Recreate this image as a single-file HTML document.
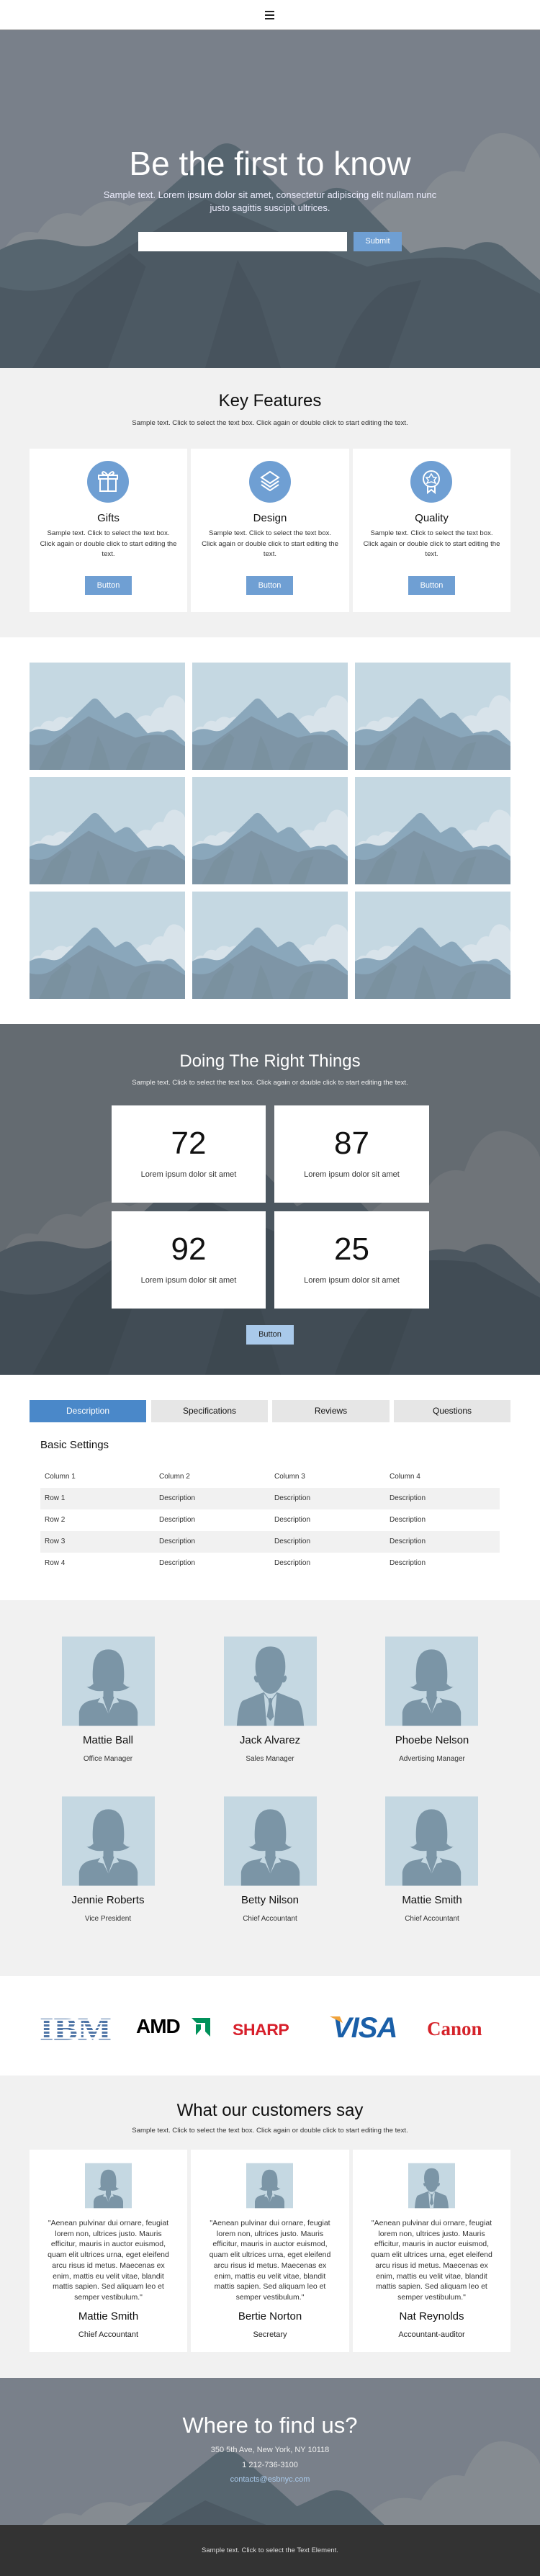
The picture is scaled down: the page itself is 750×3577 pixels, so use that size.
<!DOCTYPE html>
<html><head><meta charset="utf-8"><style>
*{margin:0;padding:0;box-sizing:border-box}
body{width:750px;height:3577px;position:relative;font-family:"Liberation Sans",sans-serif;color:#111;background:#fff;overflow:hidden}
.abs{position:absolute}
.c{text-align:center}
.sec{position:absolute;left:0;width:750px}
.scene{position:absolute;left:0;top:0;width:100%;height:100%}
.btn{position:absolute;background:#6f9fd3;color:#fff;font-size:11px;text-align:center}
.card{position:absolute;background:#fff}
.t{position:absolute;left:0;width:100%;text-align:center}
.p{font-size:9.6px;line-height:14.7px;color:#333}
.q{font-size:10.5px;line-height:14.7px;color:#333;padding:0 22px}
</style></head><body>
<svg width="0" height="0" style="position:absolute">
<defs>
<symbol id="mt" viewBox="0 0 100 100" preserveAspectRatio="none">
<rect width="100" height="100" fill="var(--sky)"/>
<path d="M0 68 Q2 58 7 60 Q10 52 15 55 Q19 48 24 52 Q29 48 33 55 L40 72 L0 75Z" fill="var(--cl)"/>
<path d="M58 80 L68 55 Q72 47 78 50 Q81 40 86 42 Q89 28 95 31 Q99 33 100 38 L100 82Z" fill="var(--cl)"/>
<path d="M0 65 Q6 60 12 63 Q18 66 22 60 L39 36 Q42 31 45 36 L55 52 L61 47 Q63 46 65 48 L76 66 Q82 63 86 65 Q90 61 93 64 L100 74 L100 100 L0 100Z" fill="var(--m1)"/>
<path d="M0 76 Q8 79 14 74 L34 54 L38 50 L42 53 Q56 63 68 70 Q78 66 88 68 L100 78 L100 100 L0 100Z" fill="var(--m2)"/>
<path d="M6 100 L14 78 L24 66 L27 70 L20 100Z M38 100 L44 68 L48 80 L52 100Z M62 100 Q66 82 72 76 L78 74 L72 100Z" fill="var(--m3)"/>
</symbol>
<symbol id="fem" viewBox="0 0 130 125">
<rect width="130" height="125" fill="#c5d8e2"/>
<path d="M65 18 Q48 18 44 38 Q42 55 44 66 Q38 72 34 70 Q46 78 58 76 L58 84 Q50 88 38 90 Q26 94 24 106 L24 125 L106 125 L106 106 Q104 94 92 90 Q80 88 72 84 L72 76 Q84 78 96 70 Q92 72 86 66 Q88 55 86 38 Q82 18 65 18Z" fill="#7b95a6"/>
<path d="M56 82 L65 108 L74 82 L80 92 L72 94 L65 108 L58 94 L50 92Z" fill="#c5d8e2"/>
</symbol>
<symbol id="mal" viewBox="0 0 130 125">
<rect width="130" height="125" fill="#c5d8e2"/>
<path d="M65 14 Q44 14 44 42 Q44 50 46 56 Q43 52 42 58 Q44 66 48 64 Q54 80 65 80 Q76 80 82 64 Q86 66 88 58 Q87 52 84 56 Q86 50 86 42 Q86 14 65 14Z" fill="#7b95a6"/>
<path d="M56 78 Q40 84 26 90 Q20 96 18 125 L112 125 Q110 96 104 90 Q90 84 74 78 L65 90Z" fill="#7b95a6"/>
<path d="M56 80 L65 92 L74 80 L70 125 L60 125Z" fill="#c5d8e2"/>
<path d="M62 88 Q65 84 68 88 L67 94 L70 112 L65 118 L60 112 L63 94Z" fill="#7b95a6"/>
</symbol>
</defs>
</svg>

<!-- header -->
<div class="sec" style="top:0;height:42px;background:#fff;border-bottom:1px solid #888">
<div class="abs" style="left:368px;top:15px;width:13px;height:2px;background:#222"></div>
<div class="abs" style="left:368px;top:20px;width:13px;height:2px;background:#222"></div>
<div class="abs" style="left:368px;top:25px;width:13px;height:2px;background:#222"></div>
</div>

<!-- hero -->
<div class="sec" style="top:42px;height:469px;--sky:#79808a;--cl:#858b91;--m1:#56656f;--m2:#4c5963;--m3:#47535d">
<svg class="scene"><use href="#mt" width="750" height="469"/></svg>
<div class="t" style="top:158px;font-size:46px;color:#fff">Be the first to know</div>
<div class="t" style="top:220px;font-size:13px;line-height:18px;color:#eef">Sample text. Lorem ipsum dolor sit amet, consectetur adipiscing elit nullam nunc<br>justo sagittis suscipit ultrices.</div>
<div class="abs" style="left:192px;top:280px;width:290px;height:27px;background:#fff"></div>
<div class="btn" style="left:491px;top:280px;width:67px;height:27px;line-height:27px">Submit</div>
</div>

<!-- key features -->
<div class="sec" style="top:511px;height:374px;background:#f1f1f1">
<div class="t" style="top:32px;font-size:24px">Key Features</div>
<div class="t p" style="top:70px">Sample text. Click to select the text box. Click again or double click to start editing the text.</div>
</div>
<div class="card" style="left:41px;top:623px;width:219px;height:227px">
<svg class="abs" style="left:80px;top:17px" width="58" height="58" viewBox="0 0 58 58"><circle cx="29" cy="29" r="29" fill="#6f9fd3"/><g fill="none" stroke="#fff" stroke-width="2"><rect x="18" y="25" width="22" height="17"/><rect x="16" y="20" width="26" height="5"/><path d="M29 20V42M29 20Q22 12 21 17Q22 20 29 20Q36 12 37 17Q36 20 29 20"/></g></svg>
<div class="t" style="top:88px;font-size:15px">Gifts</div>
<div class="t p" style="top:111px;padding:0 14px">Sample text. Click to select the text box. Click again or double click to start editing the text.</div>
<div class="btn" style="left:77px;top:177px;width:65px;height:26px;line-height:26px">Button</div>
</div>
<div class="card" style="left:265px;top:623px;width:220px;height:227px">
<svg class="abs" style="left:81px;top:17px" width="58" height="58" viewBox="0 0 58 58"><circle cx="29" cy="29" r="29" fill="#6f9fd3"/><g fill="none" stroke="#fff" stroke-width="2"><path d="M29 15L41 23L29 31L17 23Z"/><path d="M17 28L29 36L41 28"/><path d="M17 33L29 41L41 33"/></g></svg>
<div class="t" style="top:88px;font-size:15px">Design</div>
<div class="t p" style="top:111px;padding:0 14px">Sample text. Click to select the text box. Click again or double click to start editing the text.</div>
<div class="btn" style="left:77px;top:177px;width:65px;height:26px;line-height:26px">Button</div>
</div>
<div class="card" style="left:490px;top:623px;width:219px;height:227px">
<svg class="abs" style="left:80px;top:17px" width="58" height="58" viewBox="0 0 58 58"><circle cx="29" cy="29" r="29" fill="#6f9fd3"/><g fill="none" stroke="#fff" stroke-width="2"><circle cx="29" cy="25" r="11"/><path d="M29 18L32 23L36 23L33 27L35 31L29 29L23 31L25 27L22 23L26 23Z" stroke-width="1.5"/><path d="M24 35V44L29 40L34 44V35"/></g></svg>
<div class="t" style="top:88px;font-size:15px">Quality</div>
<div class="t p" style="top:111px;padding:0 14px">Sample text. Click to select the text box. Click again or double click to start editing the text.</div>
<div class="btn" style="left:77px;top:177px;width:65px;height:26px;line-height:26px">Button</div>
</div>

<!-- gallery -->
<div class="sec" style="top:885px;height:537px;background:#fff;--sky:#c5d8e2;--cl:#d8e3ea;--m1:#8aa7bb;--m2:#7e95a6;--m3:#7a919f">
<svg class="abs" style="left:0;top:0" width="750" height="537">
<use href="#mt" x="41" y="35" width="216" height="149"/><use href="#mt" x="267" y="35" width="216" height="149"/><use href="#mt" x="493" y="35" width="216" height="149"/>
<use href="#mt" x="41" y="194" width="216" height="149"/><use href="#mt" x="267" y="194" width="216" height="149"/><use href="#mt" x="493" y="194" width="216" height="149"/>
<use href="#mt" x="41" y="353" width="216" height="149"/><use href="#mt" x="267" y="353" width="216" height="149"/><use href="#mt" x="493" y="353" width="216" height="149"/>
</svg>
</div>

<!-- stats -->
<div class="sec" style="top:1422px;height:487px;--sky:#646b71;--cl:#6f7479;--m1:#4c5760;--m2:#414c55;--m3:#3d4850">
<svg class="scene"><use href="#mt" width="750" height="487"/></svg>
<div class="t" style="top:38px;font-size:24px;color:#fff">Doing The Right Things</div>
<div class="t p" style="top:75px;color:#eee">Sample text. Click to select the text box. Click again or double click to start editing the text.</div>
</div>
<div class="card" style="left:155px;top:1535px;width:214px;height:135px"><div class="t" style="top:28px;font-size:44px">72</div><div class="t" style="top:90px;font-size:11px;color:#333">Lorem ipsum dolor sit amet</div></div>
<div class="card" style="left:381px;top:1535px;width:215px;height:135px"><div class="t" style="top:28px;font-size:44px">87</div><div class="t" style="top:90px;font-size:11px;color:#333">Lorem ipsum dolor sit amet</div></div>
<div class="card" style="left:155px;top:1682px;width:214px;height:135px"><div class="t" style="top:28px;font-size:44px">92</div><div class="t" style="top:90px;font-size:11px;color:#333">Lorem ipsum dolor sit amet</div></div>
<div class="card" style="left:381px;top:1682px;width:215px;height:135px"><div class="t" style="top:28px;font-size:44px">25</div><div class="t" style="top:90px;font-size:11px;color:#333">Lorem ipsum dolor sit amet</div></div>
<div class="btn" style="left:342px;top:1840px;width:66px;height:27px;line-height:27px;background:#a9c9ea;color:#222">Button</div>

<!-- tabs -->
<div class="sec" style="top:1909px;height:313px;background:#fff">
<div class="abs c" style="left:41px;top:35px;width:162px;height:31px;line-height:31px;background:#4a88c9;color:#fff;font-size:12px">Description</div>
<div class="abs c" style="left:210px;top:35px;width:162px;height:31px;line-height:31px;background:#e6e6e6;font-size:12px">Specifications</div>
<div class="abs c" style="left:378px;top:35px;width:163px;height:31px;line-height:31px;background:#e6e6e6;font-size:12px">Reviews</div>
<div class="abs c" style="left:547px;top:35px;width:162px;height:31px;line-height:31px;background:#e6e6e6;font-size:12px">Questions</div>
<div class="abs" style="left:56px;top:89px;font-size:15px">Basic Settings</div>
<div class="abs" style="left:56px;top:127px;width:638px;font-size:10px;color:#333">
<div style="height:30px;line-height:30px;position:relative"><span class="abs" style="left:6px">Column 1</span><span class="abs" style="left:165px">Column 2</span><span class="abs" style="left:325px">Column 3</span><span class="abs" style="left:485px">Column 4</span></div>
<div style="height:30px;line-height:30px;position:relative;background:#f1f1f1"><span class="abs" style="left:6px">Row 1</span><span class="abs" style="left:165px">Description</span><span class="abs" style="left:325px">Description</span><span class="abs" style="left:485px">Description</span></div>
<div style="height:30px;line-height:30px;position:relative"><span class="abs" style="left:6px">Row 2</span><span class="abs" style="left:165px">Description</span><span class="abs" style="left:325px">Description</span><span class="abs" style="left:485px">Description</span></div>
<div style="height:30px;line-height:30px;position:relative;background:#f1f1f1"><span class="abs" style="left:6px">Row 3</span><span class="abs" style="left:165px">Description</span><span class="abs" style="left:325px">Description</span><span class="abs" style="left:485px">Description</span></div>
<div style="height:30px;line-height:30px;position:relative"><span class="abs" style="left:6px">Row 4</span><span class="abs" style="left:165px">Description</span><span class="abs" style="left:325px">Description</span><span class="abs" style="left:485px">Description</span></div>
</div>
</div>

<!-- team -->
<div class="sec" style="top:2222px;height:522px;background:#f1f1f1">
<svg class="abs" style="left:86px;top:50px" width="129" height="125"><use href="#fem" width="129" height="125"/></svg>
<svg class="abs" style="left:311px;top:50px" width="129" height="125"><use href="#mal" width="129" height="125"/></svg>
<svg class="abs" style="left:535px;top:50px" width="129" height="125"><use href="#fem" width="129" height="125"/></svg>
<svg class="abs" style="left:86px;top:272px" width="129" height="125"><use href="#fem" width="129" height="125"/></svg>
<svg class="abs" style="left:311px;top:272px" width="129" height="125"><use href="#fem" width="129" height="125"/></svg>
<svg class="abs" style="left:535px;top:272px" width="129" height="125"><use href="#fem" width="129" height="125"/></svg>
<div class="abs c" style="left:50px;width:200px;top:186px;font-size:15px">Mattie Ball</div>
<div class="abs c" style="left:275px;width:200px;top:186px;font-size:15px">Jack Alvarez</div>
<div class="abs c" style="left:500px;width:200px;top:186px;font-size:15px">Phoebe Nelson</div>
<div class="abs c" style="left:50px;width:200px;top:215px;font-size:10px;color:#333">Office Manager</div>
<div class="abs c" style="left:275px;width:200px;top:215px;font-size:10px;color:#333">Sales Manager</div>
<div class="abs c" style="left:500px;width:200px;top:215px;font-size:10px;color:#333">Advertising Manager</div>
<div class="abs c" style="left:50px;width:200px;top:408px;font-size:15px">Jennie Roberts</div>
<div class="abs c" style="left:275px;width:200px;top:408px;font-size:15px">Betty Nilson</div>
<div class="abs c" style="left:500px;width:200px;top:408px;font-size:15px">Mattie Smith</div>
<div class="abs c" style="left:50px;width:200px;top:437px;font-size:10px;color:#333">Vice President</div>
<div class="abs c" style="left:275px;width:200px;top:437px;font-size:10px;color:#333">Chief Accountant</div>
<div class="abs c" style="left:500px;width:200px;top:437px;font-size:10px;color:#333">Chief Accountant</div>
</div>

<!-- logos -->
<div class="sec" style="top:2744px;height:138px;background:#fff">
<svg class="abs" style="left:55px;top:50px" width="101" height="42" viewBox="0 0 101 42"><text x="50" y="38" text-anchor="middle" font-family="Liberation Serif,serif" font-weight="bold" font-size="44" fill="#4f75a6" textLength="100" lengthAdjust="spacingAndGlyphs">IBM</text><g fill="#fff"><rect y="5" width="101" height="2"/><rect y="10" width="101" height="2"/><rect y="15" width="101" height="2"/><rect y="20" width="101" height="2"/><rect y="25" width="101" height="2"/><rect y="30" width="101" height="2"/><rect y="35" width="101" height="2"/></g></svg>
<div class="abs" style="left:189px;top:54px;font-size:28px;font-weight:bold;color:#000;letter-spacing:-1px">AMD</div>
<svg class="abs" style="left:266px;top:58px" width="26" height="26" viewBox="0 0 26 26"><path d="M0 0H26V26L19 19V7H7Z" fill="#00915a"/><path d="M6 9L13 9L13 16L6 24Z" fill="#00915a"/></svg>
<div class="abs" style="left:323px;top:62px;font-size:22px;font-weight:bold;color:#d71f2b;letter-spacing:-0.5px;transform:scaleX(1.05);transform-origin:left">SHARP</div>
<div class="abs" style="left:462px;top:50px;font-size:40px;font-weight:bold;font-style:italic;color:#1a5fa8;letter-spacing:-1px">VISA</div>
<svg class="abs" style="left:458px;top:56px" width="20" height="10"><path d="M0 0H14L18 9Z" fill="#f2a33a"/></svg>
<div class="abs" style="left:593px;top:58px;font-size:27px;font-weight:bold;font-family:'Liberation Serif',serif;color:#d5232a">Canon</div>
</div>

<!-- testimonials -->
<div class="sec" style="top:2882px;height:420px;background:#f1f1f1">
<div class="t" style="top:35px;font-size:24px">What our customers say</div>
<div class="t p" style="top:70px">Sample text. Click to select the text box. Click again or double click to start editing the text.</div>
</div>
<div class="card" style="left:41px;top:2985px;width:219px;height:281px">
<svg class="abs" style="left:77px;top:17px" width="65" height="66"><use href="#fem" width="65" height="66"/></svg>
<div class="t q" style="top:95px">"Aenean pulvinar dui ornare, feugiat lorem non, ultrices justo. Mauris efficitur, mauris in auctor euismod, quam elit ultrices urna, eget eleifend arcu risus id metus. Maecenas ex enim, mattis eu velit vitae, blandit mattis sapien. Sed aliquam leo et semper vestibulum."</div>
<div class="t" style="top:223px;font-size:15px">Mattie Smith</div>
<div class="t" style="top:251px;font-size:11px;color:#222">Chief Accountant</div>
</div>
<div class="card" style="left:265px;top:2985px;width:220px;height:281px">
<svg class="abs" style="left:77px;top:17px" width="65" height="66"><use href="#fem" width="65" height="66"/></svg>
<div class="t q" style="top:95px">"Aenean pulvinar dui ornare, feugiat lorem non, ultrices justo. Mauris efficitur, mauris in auctor euismod, quam elit ultrices urna, eget eleifend arcu risus id metus. Maecenas ex enim, mattis eu velit vitae, blandit mattis sapien. Sed aliquam leo et semper vestibulum."</div>
<div class="t" style="top:223px;font-size:15px">Bertie Norton</div>
<div class="t" style="top:251px;font-size:11px;color:#222">Secretary</div>
</div>
<div class="card" style="left:490px;top:2985px;width:219px;height:281px">
<svg class="abs" style="left:77px;top:17px" width="65" height="66"><use href="#mal" width="65" height="66"/></svg>
<div class="t q" style="top:95px">"Aenean pulvinar dui ornare, feugiat lorem non, ultrices justo. Mauris efficitur, mauris in auctor euismod, quam elit ultrices urna, eget eleifend arcu risus id metus. Maecenas ex enim, mattis eu velit vitae, blandit mattis sapien. Sed aliquam leo et semper vestibulum."</div>
<div class="t" style="top:223px;font-size:15px">Nat Reynolds</div>
<div class="t" style="top:251px;font-size:11px;color:#222">Accountant-auditor</div>
</div>

<!-- contact -->
<div class="sec" style="top:3302px;height:204px;overflow:hidden;--sky:#79808a;--cl:#858b91;--m1:#56656f;--m2:#4c5963;--m3:#47535d">
<svg class="scene" style="height:420px;top:-40px"><use href="#mt" width="750" height="420"/></svg>
<div class="t" style="top:48px;font-size:31px;color:#fff">Where to find us?</div>
<div class="t" style="top:94px;font-size:11px;color:#eee">350 5th Ave, New York, NY 10118</div>
<div class="t" style="top:115px;font-size:11px;color:#eee">1 212-736-3100</div>
<div class="t" style="top:135px;font-size:11px;color:#a9c9ea">contacts@esbnyc.com</div>
</div>

<!-- footer -->
<div class="sec" style="top:3506px;height:71px;background:#333">
<div class="t" style="top:30px;font-size:9.5px;color:#ddd">Sample text. Click to select the Text Element.</div>
</div>
</body></html>
